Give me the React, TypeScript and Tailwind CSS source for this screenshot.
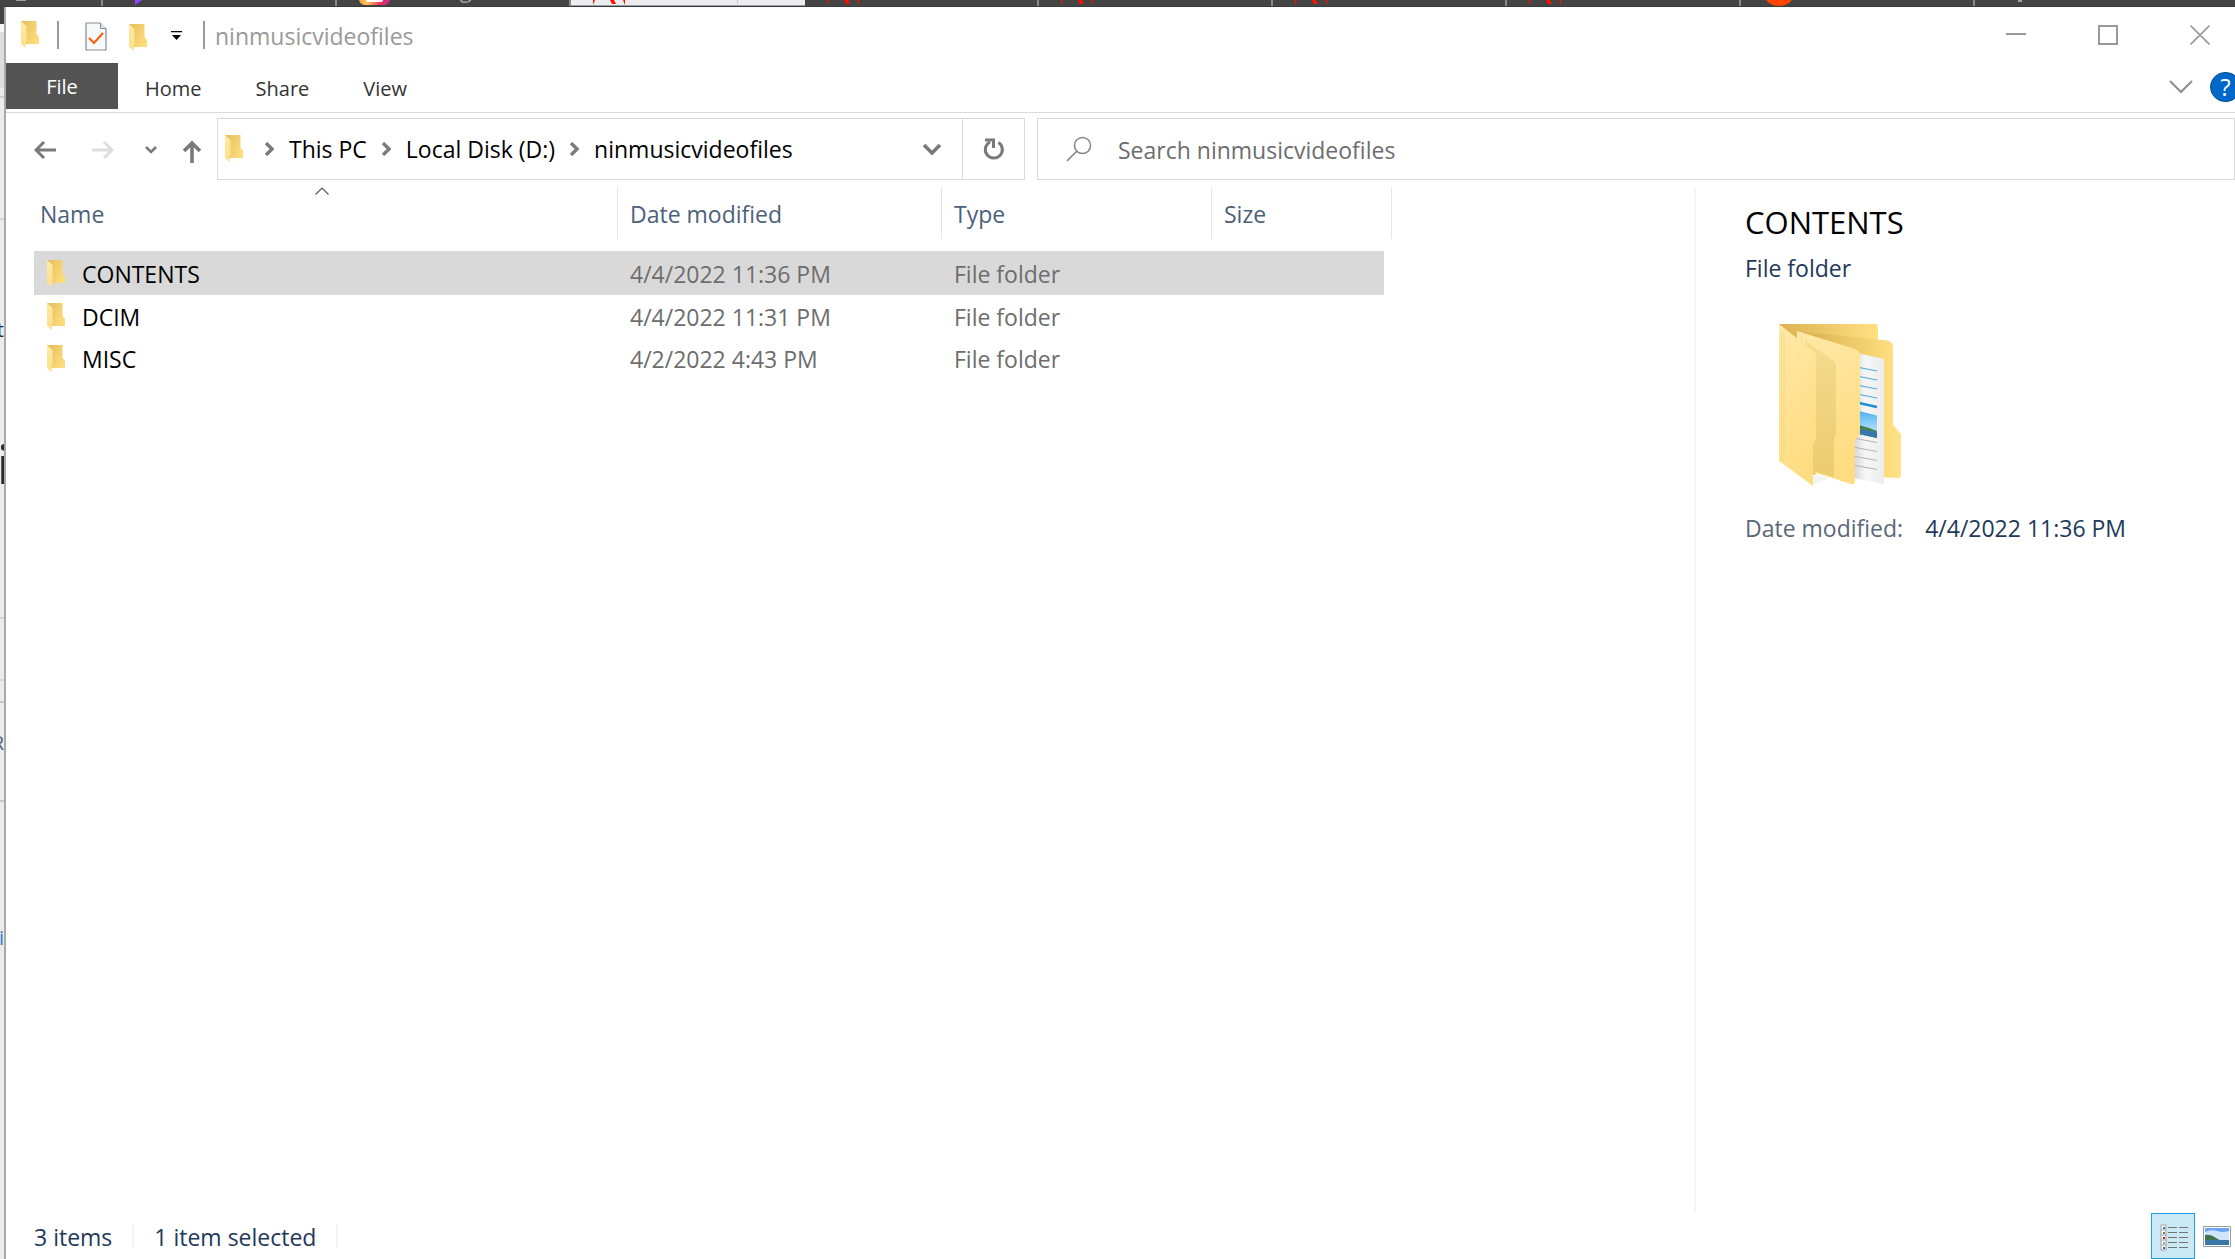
import { useState } from "react";
import type { ReactNode } from "react";

type Entry = {
  name: string;
  modified: string;
  type: string;
  size: string;
};

const entries: Entry[] = [
  { name: "CONTENTS", modified: "4/4/2022 11:36 PM", type: "File folder", size: "" },
  { name: "DCIM", modified: "4/4/2022 11:31 PM", type: "File folder", size: "" },
  { name: "MISC", modified: "4/2/2022 4:43 PM", type: "File folder", size: "" },
];

const crumbs = ["This PC", "Local Disk (D:)", "ninmusicvideofiles"];

const ribbonTabs = ["Home", "Share", "View"];

function FolderIcon() {
  return (
    <svg width="19" height="28" viewBox="0 0 19 28" className="shrink-0" aria-hidden="true">
      <defs>
        <linearGradient id="folderBack" x1="0" y1="0" x2="1" y2="0.6">
          <stop offset="0" stopColor="#e3bd5c" />
          <stop offset="1" stopColor="#fddb7b" />
        </linearGradient>
        <linearGradient id="folderFront" x1="0" y1="0" x2="0" y2="1">
          <stop offset="0" stopColor="#ffe9a4" />
          <stop offset="1" stopColor="#ffdf8c" />
        </linearGradient>
      </defs>
      <path d="M0 0h15.5v13l2.5 2.5V23H4z" fill="url(#folderBack)" />
      <path d="M0 0l5.500 5v15l-.8 1.200V27L0 23z" fill="url(#folderFront)" />
    </svg>
  );
}

function LargeFolder() {
  return (
    <svg width="124" height="164" viewBox="0 0 124 164" aria-hidden="true">
      <defs>
        <linearGradient id="lfBack" x1="0" y1="0" x2="1" y2="0">
          <stop offset="0" stopColor="#dcb250" />
          <stop offset="1" stopColor="#ffe081" />
        </linearGradient>
        <linearGradient id="lfMid" x1="0" y1="0" x2="1" y2="0">
          <stop offset="0.2" stopColor="#dfb856" />
          <stop offset="0.85" stopColor="#fbdb7b" />
          <stop offset="1" stopColor="#ffe289" />
        </linearGradient>
        <linearGradient id="lfFront" x1="0" y1="0" x2="0.3" y2="1">
          <stop offset="0" stopColor="#ffe9a8" />
          <stop offset="1" stopColor="#fedc82" />
        </linearGradient>
        <linearGradient id="lfShade" x1="0" y1="0" x2="0" y2="1">
          <stop offset="0" stopColor="#f3dc8c" />
          <stop offset="1" stopColor="#eccb70" />
        </linearGradient>
        <linearGradient id="lfPaper" x1="0" y1="0" x2="1" y2="0">
          <stop offset="0" stopColor="#d4d4d4" />
          <stop offset="0.4" stopColor="#f6f6f6" />
          <stop offset="1" stopColor="#ececec" />
        </linearGradient>
        <linearGradient id="lfSky" x1="0" y1="0" x2="0" y2="1">
          <stop offset="0" stopColor="#4db2f5" />
          <stop offset="1" stopColor="#d8effb" />
        </linearGradient>
      </defs>
      <path d="M0 0h96q3 0 3 4v20L34 156 0 60z" fill="url(#lfBack)" />
      <path d="M18 7l90 9.500q6 1 6 6V101l8 9v41q0 3-3 3l-20-1-40-20z" fill="url(#lfMid)" />
      <path d="M34 150l16 4-17 7z" fill="#f4f4f4" />
      <path d="M74 28l31 7v125l-31-6z" fill="url(#lfPaper)" />
      <path d="M80 43.500l18 3.500M80 52.500l18 3.500M80 61.500l18 3.500M80 70.500l18 3.500" stroke="#4aaee0" strokeWidth="1.200" />
      <path d="M80 79l18 4" stroke="#1c8fd6" strokeWidth="2.400" />
      <path d="M80 87l18 4.500V114l-18-4z" fill="url(#lfSky)" />
      <path d="M80 101q8 2 18 6v7l-18-4z" fill="#4d7b55" />
      <path d="M80 105l18 3v6l-18-4z" fill="#347aa9" />
      <path d="M74 114l24 4.500M74 123l24 4.500M74 132l24 4.500M74 141l24 4.500" stroke="#b4b4b4" strokeWidth="1" />
      <path d="M18 7l58 18q5 2 5 6v79l-5 6v41q0 4-4 3l-38-12-16-20z" fill="url(#lfFront)" />
      <path d="M28 18l27 19q2 2 2 4v69l-2 5v38l-21-6z" fill="url(#lfShade)" />
      <path d="M0 0l34 27q3 2 3 4v84l-3 5v42L0 137z" fill="url(#lfFront)" />
      <path d="M2.500 7v130M5 9v129" stroke="#f5d67c" strokeWidth="0.800" />
      <path d="M23 13v6M27 15v8" stroke="#f0d278" strokeWidth="0.800" />
    </svg>
  );
}

function CrumbArrow() {
  return (
    <svg width="10" height="14" viewBox="0 0 10 14" fill="none" className="shrink-0" aria-hidden="true">
      <path d="M2 1l6 6-6 6" stroke="#7b7b7b" strokeWidth="3.400" />
    </svg>
  );
}

function AdobeMark() {
  return (
    <svg width="32" height="5" viewBox="0 0 32 5" className="shrink-0" aria-hidden="true">
      <path d="M0 0h2L0 5zM17 0h4l2 4h-4zM30 0h2v5z" fill="#fa0f00" />
    </svg>
  );
}

function BrowserTab({ children, active }: { children?: ReactNode; active?: boolean }) {
  return (
    <div
      className={
        active
          ? "flex h-full w-[234px] shrink-0 items-start border-b border-gray-400 bg-[#ededed] pl-[22px]"
          : "flex h-full w-[234px] shrink-0 items-start border-r-2 border-[#8a8a8a] pl-[22px]"
      }
    >
      {children}
    </div>
  );
}

function BrowserStrip() {
  return (
    <div className="flex h-[7px] shrink-0 overflow-hidden border-b border-[#3a3a3a] bg-[#444444]" aria-hidden="true">
      <div className="h-full w-[103px] shrink-0 border-r-2 border-[#8a8a8a] pl-4">
        <div className="h-px w-[10px] bg-gray-400" />
      </div>
      <BrowserTab>
        <svg width="24" height="6" viewBox="0 0 24 6" className="ml-2">
          <path d="M2 0h7L2 5z" fill="#9146ff" />
        </svg>
      </BrowserTab>
      <BrowserTab>
        <svg width="32" height="6" viewBox="0 0 32 6">
          <defs>
            <linearGradient id="ig">
              <stop offset="0" stopColor="#fba23c" />
              <stop offset="0.25" stopColor="#fcc45c" />
              <stop offset="0.7" stopColor="#ee2a5b" />
              <stop offset="1" stopColor="#c92a9a" />
            </linearGradient>
          </defs>
          <path d="M0 0h31q-1 5-7 5H7Q1 5 0 0z" fill="url(#ig)" />
          <path d="M7 0h17q0 2-3 2H10Q7 2 7 0z" fill="#fff" />
        </svg>
        <span className="-mt-7 ml-4 text-[23px] leading-8 text-gray-400">Instagram</span>
      </BrowserTab>
      <BrowserTab active>
        <AdobeMark />
        <div className="ml-28 h-1 w-px bg-[#c5c8d6]" />
      </BrowserTab>
      <BrowserTab>
        <AdobeMark />
      </BrowserTab>
      <BrowserTab>
        <AdobeMark />
      </BrowserTab>
      <BrowserTab>
        <AdobeMark />
      </BrowserTab>
      <BrowserTab>
        <AdobeMark />
      </BrowserTab>
      <BrowserTab>
        <svg width="32" height="6" viewBox="0 0 32 6">
          <path d="M3 0h26q-5 6-13 6T3 0z" fill="#ff4500" />
        </svg>
      </BrowserTab>
      <div className="pl-[43px]">
        <div className="h-[2px] w-1 bg-gray-400" />
      </div>
    </div>
  );
}

// sliver of the page behind the window
function PageEdge() {
  return (
    <div
      className="flex w-[6px] shrink-0 flex-col overflow-hidden border-r-2 border-[#a9a9a9] bg-[#ebebeb]"
      aria-hidden="true"
    >
      <div className="h-[17px] shrink-0 bg-[#444444]" />
      <div className="h-[8px] shrink-0 bg-[#f5f5f5]" />
      <div className="h-[56px] shrink-0 bg-[#dcdee1]" />
      <div className="h-[10px] shrink-0 border-b-2 border-[#cfcfcf]" />
      <div className="h-[122px] shrink-0 border-b-2 border-[#d5d5d5]" />
      <div className="flex h-[399px] shrink-0 flex-col items-end border-b-2 border-[#d5d5d5] pt-[94px]">
        <span className="text-[20px] leading-8 text-[#1c2b4a]">t</span>
        <span className="mt-[88px] -ml-[3px] self-start text-[52px] leading-[60px] font-semibold text-[#2b2b2b]">
          i
        </span>
      </div>
      <div className="h-[62px] shrink-0 border-b-2 border-[#d5d5d5]" />
      <div className="h-[22px] shrink-0 border-b-2 border-[#c8c8c8]" />
      <div className="flex h-[99px] shrink-0 justify-end border-b-2 border-[#c8c8c8] pt-6">
        <span className="text-[20px] leading-8 text-[#5c6684]">R</span>
      </div>
      <div className="flex shrink-0 justify-end pt-[120px]">
        <span className="text-[20px] leading-8 text-[#2f7fc4]">i</span>
      </div>
    </div>
  );
}

function TitleBar() {
  return (
    <header className="flex h-14 shrink-0 items-center pl-[15px]">
      <FolderIcon />
      <div className="ml-[17px] h-7 w-0.5 bg-[#9a9a9a]" />
      <button type="button" aria-label="Properties" className="ml-[26px] pt-0.5">
        <svg width="22" height="29" viewBox="0 0 22 29" fill="none">
          <path d="M1 1h14l6 6v21H1z" fill="#f8f9fa" stroke="#858b91" strokeWidth="1.200" />
          <path d="M15.500 1v5.500H21" fill="#e4e7ea" stroke="#858b91" />
          <path d="M4 16l5 5 9-10" stroke="#f7630c" strokeWidth="2.200" />
        </svg>
      </button>
      <button type="button" aria-label="New folder" className="ml-[22px] pt-1.5">
        <FolderIcon />
      </button>
      <button type="button" aria-label="Customize Quick Access Toolbar" className="ml-[23px] pt-0.5">
        <svg width="12" height="10" viewBox="0 0 12 10">
          <path d="M0 0h11v1.200H0zM1 4h9L5.500 9z" fill="#000" />
        </svg>
      </button>
      <div className="ml-5 h-7 w-0.5 bg-[#9a9a9a]" />
      <h1 className="ml-[10px] pt-0.5 text-[23px] leading-8 text-[#999999]">ninmusicvideofiles</h1>
      <div className="-mr-[11px] ml-auto flex h-full">
        <button type="button" aria-label="Minimize" className="flex w-[92px] items-center justify-center">
          <svg width="20" height="20" viewBox="0 0 20 20">
            <path d="M0 8h20v2H0z" fill="#999" />
          </svg>
        </button>
        <button type="button" aria-label="Maximize" className="flex w-[92px] items-center justify-center">
          <svg width="20" height="20" viewBox="0 0 20 20" fill="none">
            <path d="M1 1h18v18H1z" stroke="#999" strokeWidth="2" />
          </svg>
        </button>
        <button type="button" aria-label="Close" className="flex w-[92px] items-center justify-center">
          <svg width="20" height="20" viewBox="0 0 20 20" fill="none">
            <path d="M.5.500l19 19M19.500.500l-19 19" stroke="#999" strokeWidth="1.600" />
          </svg>
        </button>
      </div>
    </header>
  );
}

function Ribbon() {
  return (
    <nav className="flex h-[50px] shrink-0 items-start border-b border-[#dadada] text-[20px] leading-7">
      <button type="button" className="h-[46px] w-28 bg-[#535353] pt-0.5 text-white">
        File
      </button>
      {ribbonTabs.map((tab) => (
        <button key={tab} type="button" className="h-[46px] px-[27px] pt-1.5 text-[#333333]">
          {tab}
        </button>
      ))}
      <div className="-mr-[6px] ml-auto flex h-12 items-center gap-[17px]">
        <button type="button" aria-label="Expand the Ribbon">
          <svg width="24" height="14" viewBox="0 0 24 14" fill="none">
            <path d="M1 1l11 11L23 1" stroke="#8e8e8e" strokeWidth="2" />
          </svg>
        </button>
        <button
          type="button"
          aria-label="Help"
          className="h-[30px] w-[31px] rounded-full border border-[#0a4f8c] bg-[#0068c9] text-[24px] leading-7 text-white"
        >
          ?
        </button>
      </div>
    </nav>
  );
}

function AddressRow() {
  return (
    <div className="flex h-[68px] shrink-0 pt-[5px]">
      <div className="flex w-[211px] shrink-0 items-center pl-7">
        <button type="button" aria-label="Back">
          <svg width="22" height="18" viewBox="0 0 22 18" fill="none">
            <path d="M22 9H2M10 1L2 9l8 8" stroke="#797979" strokeWidth="3" />
          </svg>
        </button>
        <button type="button" aria-label="Forward" className="ml-9">
          <svg width="22" height="18" viewBox="0 0 22 18" fill="none">
            <path d="M0 9h20M12 1l8 8-8 8" stroke="#dedede" strokeWidth="3" />
          </svg>
        </button>
        <button type="button" aria-label="Recent locations" className="ml-[31px]">
          <svg width="12" height="8" viewBox="0 0 12 8" fill="none">
            <path d="M1 1l5 5 5-5" stroke="#797979" strokeWidth="2.600" />
          </svg>
        </button>
        <button type="button" aria-label="Up" className="ml-[26px] pt-1">
          <svg width="18" height="23" viewBox="0 0 18 23" fill="none">
            <path d="M9 23V3M1 11l8-8 8 8" stroke="#797979" strokeWidth="3.600" />
          </svg>
        </button>
      </div>
      <div className="flex h-[62px] w-[808px] shrink-0 items-center border border-[#d9d9d9] pl-[7px]">
        <FolderIcon />
        <ol className="ml-5 flex items-center gap-[14px] text-[23px] leading-8 text-black">
          {crumbs.map((crumb) => (
            <li key={crumb} className="flex items-center gap-[15px]">
              <CrumbArrow />
              <button type="button">{crumb}</button>
            </li>
          ))}
        </ol>
        <button type="button" aria-label="Previous locations" className="mr-5 ml-auto">
          <svg width="20" height="13" viewBox="0 0 20 13" fill="none">
            <path d="M2 2l8 8 8-8" stroke="#797979" strokeWidth="3.400" />
          </svg>
        </button>
        <button
          type="button"
          aria-label="Refresh"
          className="flex h-full w-[62px] items-center justify-center border-l border-[#d9d9d9]"
        >
          <svg width="22" height="24" viewBox="0 0 22 24" fill="none">
            <path d="M15.500 5.500a8.500 8.500 0 1 1-8.500-.5" stroke="#797979" strokeWidth="3" />
            <path d="M2 3h8.500v8" stroke="#797979" strokeWidth="3" />
          </svg>
        </button>
      </div>
      <label className="ml-3 flex h-[62px] min-w-0 flex-1 items-center border border-[#d9d9d9] pl-7">
        <svg width="26" height="26" viewBox="0 0 26 26" fill="none" className="shrink-0" aria-hidden="true">
          <circle cx="16.500" cy="9.500" r="8" stroke="#858585" strokeWidth="1.500" />
          <path d="M11 15L1 25" stroke="#858585" strokeWidth="1.700" />
        </svg>
        <input
          type="search"
          aria-label="Search ninmusicvideofiles"
          placeholder="Search ninmusicvideofiles"
          className="ml-[26px] min-w-0 flex-1 pt-0.5 text-[23px] leading-8 outline-none placeholder:text-[#6d6d6d]"
        />
      </label>
    </div>
  );
}

function FileTable({ selected, onSelect }: { selected: string; onSelect: (name: string) => void }) {
  return (
    <table className="w-[1358px] table-fixed border-separate border-spacing-0 text-left text-[23px] leading-8">
      <colgroup>
        <col className="w-[584px]" />
        <col className="w-[324px]" />
        <col className="w-[270px]" />
        <col className="w-[180px]" />
      </colgroup>
      <thead>
        <tr className="h-[52px] text-[#4c607a]">
          <th className="relative border-r border-[#e5e5e5] p-0 pt-0.5 pl-[6px] font-normal">
            Name
            <svg
              width="14"
              height="8"
              viewBox="0 0 14 8"
              fill="none"
              className="absolute top-0 left-[281px]"
              aria-hidden="true"
            >
              <path d="M.5 7.500L7 1l6.500 6.500" stroke="#5a5a5a" strokeWidth="1.200" />
            </svg>
          </th>
          <th className="border-r border-[#e5e5e5] p-0 pt-0.5 pl-3 font-normal">Date modified</th>
          <th className="border-r border-[#e5e5e5] p-0 pt-0.5 pl-3 font-normal">Type</th>
          <th className="border-r border-[#e5e5e5] p-0 pt-0.5 pl-3 font-normal">Size</th>
        </tr>
      </thead>
      <tbody className="before:block before:h-3 before:content-['']">
        {entries.map((entry) => (
          <tr
            key={entry.name}
            onClick={() => onSelect(entry.name)}
            className={entry.name === selected ? "h-11 bg-[#d9d9d9]" : "h-[42px]"}
          >
            <td className="p-0 pt-px pl-[13px] text-black">
              <div className="flex items-center gap-4">
                <FolderIcon />
                {entry.name}
              </div>
            </td>
            <td className="p-0 pt-px pl-3 text-[#6d6d6d]">{entry.modified}</td>
            <td className="p-0 pt-px pl-3 text-[#6d6d6d]">{entry.type}</td>
            <td className="border-r-8 border-white p-0 pt-px pl-3 text-[#6d6d6d]">{entry.size}</td>
          </tr>
        ))}
      </tbody>
    </table>
  );
}

function DetailsPane({ entry }: { entry: Entry }) {
  return (
    <aside className="w-[541px] shrink-0 border-l-2 border-[#f5f5f5] pt-3 pl-[49px]">
      <h2 className="text-[31px] leading-[46px] text-black">{entry.name}</h2>
      <p className="pt-[7px] text-[23px] leading-8 text-[#1e395b]">{entry.type}</p>
      <div className="pt-10 pl-[34px]">
        <LargeFolder />
      </div>
      <dl className="flex gap-[22px] pt-6 text-[23px] leading-8">
        <dt className="text-[#5a6779]">Date modified:</dt>
        <dd className="text-[#1e395b]">{entry.modified}</dd>
      </dl>
    </aside>
  );
}

function StatusBar() {
  return (
    <footer className="flex h-[46px] shrink-0 items-center pl-7 text-[23px] leading-8 text-[#1e395b]">
      <span className="pt-0.5">{entries.length} items</span>
      <div className="mx-5 h-6 w-0.5 bg-[#f3f3f3]" />
      <span className="pt-0.5">1 item selected</span>
      <div className="mx-5 h-6 w-0.5 bg-[#f3f3f3]" />
      <button
        type="button"
        aria-label="Details view"
        className="ml-auto flex h-[46px] w-11 items-center justify-center border border-[#26a0da] bg-[#cbe8f6]"
      >
        <svg width="28" height="28" viewBox="0 0 28 28" fill="none" className="mt-1 ml-0.5">
          <path d="M1 1h5v25H1z" fill="#fff" stroke="#a0a0a0" />
          <path d="M1 6h5M1 11h5M1 16h5M1 21h5" stroke="#a0a0a0" />
          <path d="M3 3h2v2H3z" fill="#3a6f9a" />
          <path d="M3 8h2v2H3z" fill="#7a8a3a" />
          <path d="M3 13h2v2H3z" fill="#c01818" />
          <path d="M3 18h2v2H3z" fill="#8fb0a0" />
          <path d="M3 23h2v2H3z" fill="#2f6a8a" />
          <path
            d="M8 3.500h9M19 3.500h9M8 8.500h9M19 8.500h9M8 13.500h9M19 13.500h9M8 18.500h9M19 18.500h9M8 23.500h9M19 23.500h9"
            stroke="#747474"
          />
        </svg>
      </button>
      <button type="button" aria-label="Large icons view" className="mr-1 ml-2">
        <svg width="28" height="21" viewBox="0 0 28 21">
          <path d="M.5.500h27v20H.5z" fill="#fff" stroke="#9c9c9c" />
          <path d="M2 2h24v5H2z" fill="#6aa5f5" />
          <path d="M2 6q6-3 12-1t12 0v10H2z" fill="#cfe5fb" />
          <path d="M2 9q6-1 11 3t13 2v1H2z" fill="#3f7350" />
          <path d="M2 14h24v5H2z" fill="#3a77ab" />
        </svg>
      </button>
    </footer>
  );
}

export default function App() {
  const [selected, setSelected] = useState("CONTENTS");
  const current = entries.find((e) => e.name === selected) ?? entries[0];

  return (
    <div className="flex h-screen flex-col overflow-hidden bg-white font-['Open_Sans','Noto_Sans',sans-serif]">
      <BrowserStrip />
      <div className="flex min-h-0 flex-1">
        <PageEdge />
        <div className="flex min-w-0 flex-1 flex-col">
          <TitleBar />
          <Ribbon />
          <AddressRow />
          <main className="flex min-h-0 flex-1 pt-[6px]">
            <div className="min-w-0 flex-1 pl-7">
              <FileTable selected={selected} onSelect={setSelected} />
            </div>
            <DetailsPane entry={current} />
          </main>
          <StatusBar />
        </div>
      </div>
    </div>
  );
}
